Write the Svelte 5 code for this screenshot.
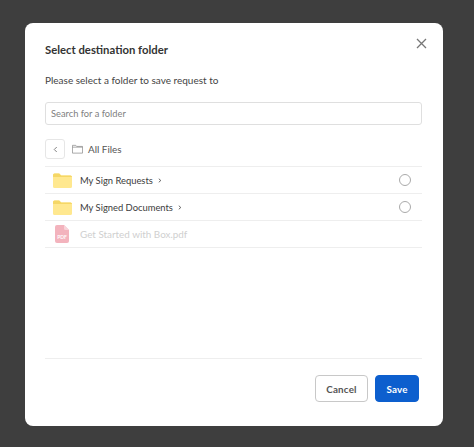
<script>
  const rows = [
    { name: 'My Sign Requests' },
    { name: 'My Signed Documents' }
  ];
</script>

<div class="page">
  <section class="modal">
    <button class="close" aria-label="Close">
      <svg viewBox="0 0 11 11" width="11" height="11"><path d="M1 1l9 9M10 1l-9 9" /></svg>
    </button>
    <h1>Select destination folder</h1>
    <p>Please select a folder to save request to</p>
    <input class="search" placeholder="Search for a folder" />
    <div class="crumbs">
      <button class="back" aria-label="Back">
        <svg viewBox="0 0 6 8" width="5" height="7"><path d="M4.500 1L1.500 4l3 3" /></svg>
      </button>
      <svg class="crumb-folder" viewBox="0 0 12 10" width="11" height="10"><path d="M.5 1h3.600l1 1.200h6.400v7.300H.5zM.5 3h11" /></svg>
      <span>All Files</span>
    </div>
    <ul class="list">
      {#each rows as row}
        <li>
          <svg class="folder" viewBox="0 0 19 15" width="19" height="15">
            <path d="M0 2a1.500 1.500 0 0 1 1.500-1.500h4.700l2 2h9.300A1.500 1.500 0 0 1 19 4v9.500a1.500 1.500 0 0 1-1.500 1.500h-16A1.500 1.500 0 0 1 0 13.500z" fill="#ffe88f" />
            <path d="M0 2a1.500 1.500 0 0 1 1.500-1.500h4.700l2 2h9.300A1.500 1.500 0 0 1 19 4H0z" fill="#f5d766" />
          </svg>
          <span class="name">{row.name}</span>
          <svg class="chev" viewBox="0 0 5 6" width="4" height="5"><path d="M1 .8L3.500 3 1 5.200" /></svg>
          <span class="radio"></span>
        </li>
      {/each}
      <li class="disabled">
        <svg class="pdf" viewBox="0 0 14 18" width="14" height="18">
          <path d="M2 0h7l5 5v11a2 2 0 0 1-2 2H2a2 2 0 0 1-2-2V2a2 2 0 0 1 2-2z" fill="#f3b3bd" />
          <path d="M9 0l5 5h-3.500A1.500 1.500 0 0 1 9 3.500z" fill="#f8d3d9" />
          <text x="7" y="13.500" text-anchor="middle">PDF</text>
        </svg>
        <span class="name">Get Started with Box.pdf</span>
      </li>
    </ul>
    <div class="spacer"></div>
    <footer>
      <button class="cancel">Cancel</button>
      <button class="save">Save</button>
    </footer>
  </section>
</div>

<style>
  :global(body) {
    margin: 0;
    background: #3e3e3e;
  }
  .page {
    box-sizing: border-box;
    height: 447px;
    padding: 23px 31px 21px 25px;
    font-family: Lato, "Open Sans", sans-serif;
    color: #222;
  }
  .modal {
    position: relative;
    box-sizing: border-box;
    height: 403px;
    background: #fff;
    border-radius: 8px;
    padding: 19px 21px 24px 20px;
    display: flex;
    flex-direction: column;
  }
  .close {
    position: absolute;
    top: 15px;
    right: 16px;
    width: 11px;
    height: 11px;
    padding: 0;
    border: 0;
    background: none;
    display: flex;
  }
  .close path {
    stroke: #777;
    stroke-width: 1.300;
    fill: none;
  }
  h1 {
    margin: 0;
    font-size: 11.300px;
    line-height: 15px;
    font-weight: 700;
    color: #333;
  }
  p {
    margin: 16px 0 0;
    font-size: 10px;
    line-height: 14px;
    color: #444;
  }
  .search {
    box-sizing: border-box;
    margin-top: 15px;
    width: 377px;
    height: 23px;
    padding: 0 5px;
    border: 1px solid #dfdfdf;
    border-radius: 3px;
    font: 9.300px Lato, sans-serif;
    outline: none;
  }
  .search::placeholder {
    color: #808080;
    opacity: 1;
  }
  .crumbs {
    display: flex;
    align-items: center;
    margin-top: 14px;
    height: 20px;
    font-size: 9.900px;
    color: #555;
  }
  .back {
    box-sizing: border-box;
    width: 20px;
    height: 20px;
    padding: 0;
    border: 1px solid #e6e6e6;
    border-radius: 3px;
    background: #fff;
    display: flex;
    align-items: center;
    justify-content: center;
  }
  .back path {
    stroke: #777;
    stroke-width: 1.100;
    fill: none;
  }
  .crumb-folder {
    margin: 0 5px 0 7px;
  }
  .crumb-folder path {
    stroke: #8a8a8a;
    stroke-width: 0.800;
    fill: none;
  }
  .list {
    list-style: none;
    margin: 7px 0 0;
    padding: 0;
    border-top: 1px solid #eee;
  }
  li {
    box-sizing: border-box;
    height: 27px;
    display: flex;
    align-items: center;
    border-bottom: 1px solid #eee;
    padding-left: 8px;
    font-size: 9.400px;
    color: #3c3c3c;
  }
  .folder {
    flex: none;
    margin-right: 8px;
  }
  .name {
    white-space: nowrap;
  }
  .chev {
    margin-left: 5px;
  }
  .chev path {
    stroke: #444;
    stroke-width: 1;
    fill: none;
  }
  .radio {
    box-sizing: border-box;
    width: 12px;
    height: 12px;
    margin-left: auto;
    margin-right: 11px;
    border: 1px solid #aaa;
    border-radius: 50%;
  }
  .disabled {
    color: #cfcfcf;
    padding-left: 10px;
    font-size: 9.900px;
  }
  .pdf {
    flex: none;
    margin-right: 11px;
  }
  .pdf text {
    font: 700 5px Lato, sans-serif;
    fill: #fff;
  }
  .spacer {
    flex: 1;
    border-bottom: 1px solid #eee;
  }
  footer {
    display: flex;
    justify-content: flex-end;
    gap: 7px;
    margin-top: 16px;
    padding-right: 3px;
  }
  footer button {
    box-sizing: border-box;
    height: 27px;
    padding: 0;
    border-radius: 4px;
    font: 700 9.800px Lato, sans-serif;
    letter-spacing: 0.2px;
  }
  .cancel {
    width: 53px;
    background: #fff;
    border: 1px solid #c8c8c8;
    color: #555;
  }
  .save {
    width: 44px;
    background: #0d5fce;
    border: 1px solid #0d5fce;
    color: #fff;
  }
</style>
